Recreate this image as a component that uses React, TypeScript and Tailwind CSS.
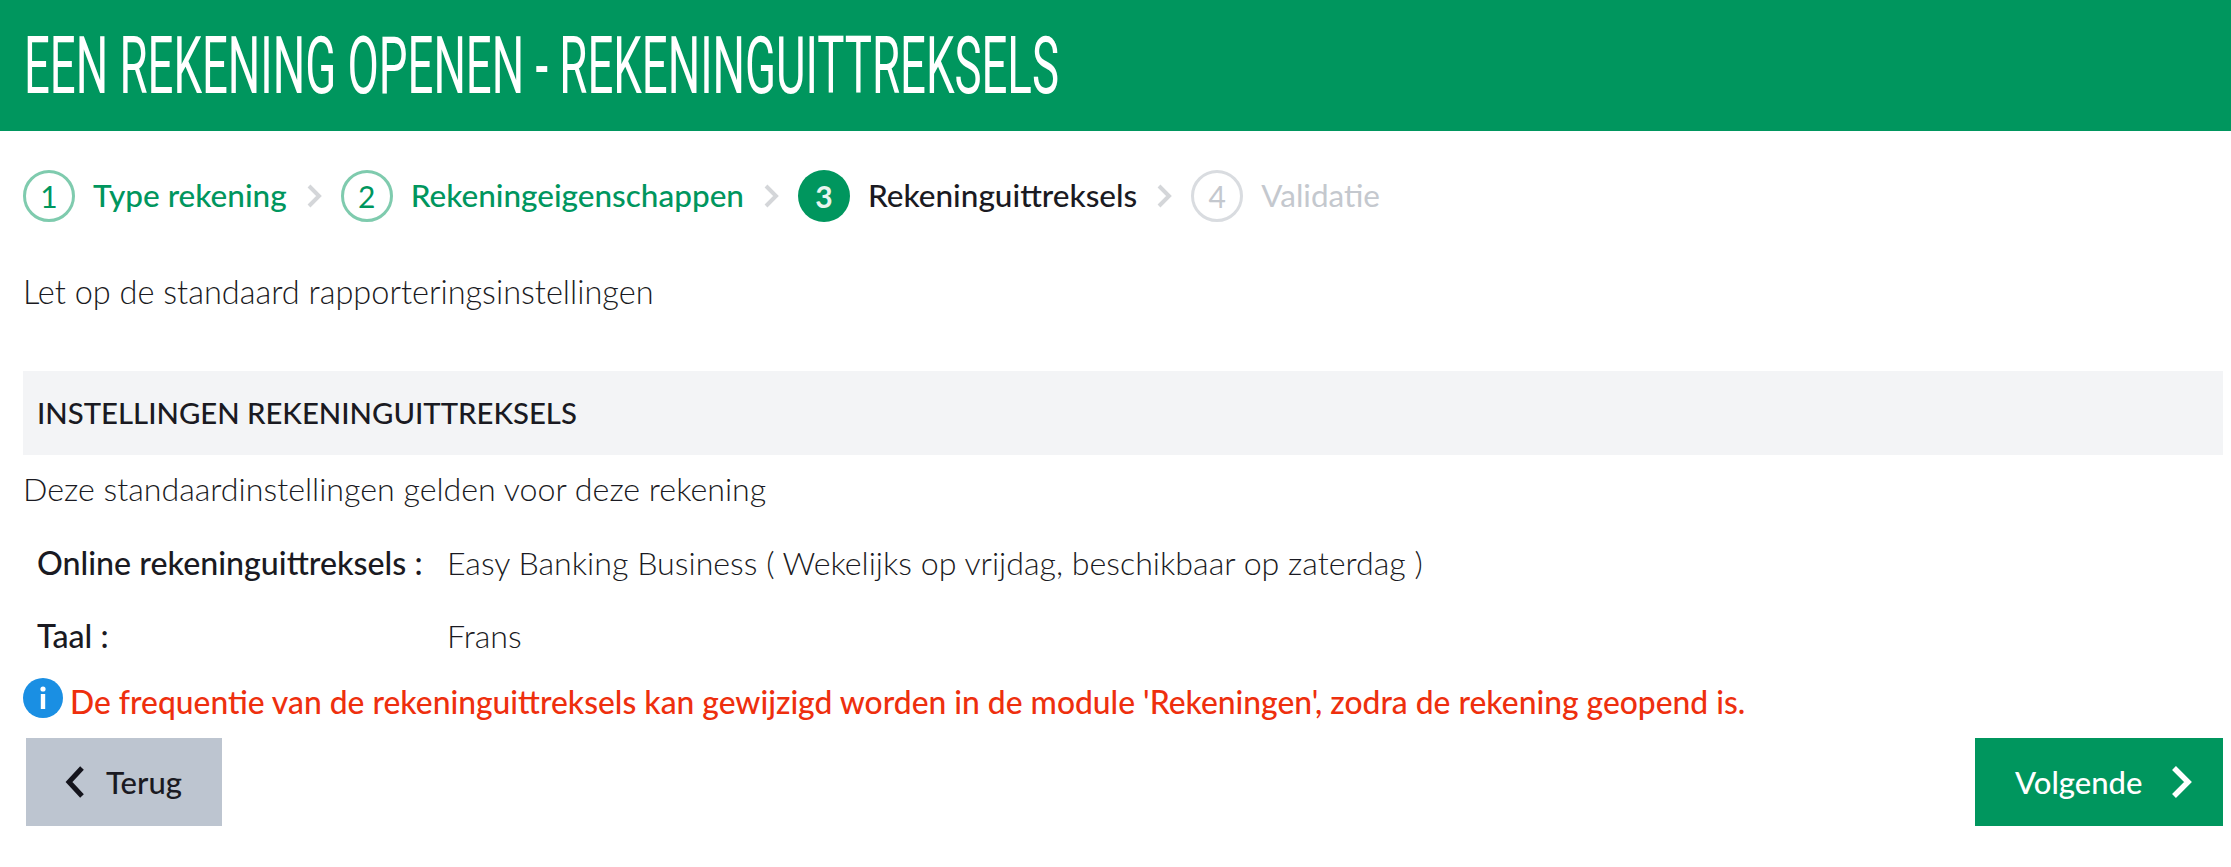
const Step = ({ n, label, state }: { n: number; label: string; state: "done" | "active" | "todo" }) => {
  const circle =
    state === "done"
      ? "border-[3px] border-[#7fcbae] text-[#00965e]"
      : state === "active"
        ? "bg-[#00965e] text-[#e8f5ef] font-bold"
        : "border-[3px] border-[#d9dce0] text-[#c4c8ce]";
  const text = state === "done" ? "text-[#00965e] font-medium" : state === "active" ? "text-[#1a1a22] font-medium" : "text-[#c4c8ce]";
  return (
    <div className="flex items-center">
      <div className={`flex h-[52px] w-[52px] shrink-0 items-center justify-center rounded-full text-[30px] ${circle}`}>{n}</div>
      <span className={`ml-[18px] text-[31.5px] leading-none ${text}`}>{label}</span>
    </div>
  );
};

const Chevron = () => (
  <svg width="18" height="26" viewBox="0 0 18 26" fill="none" className="mx-[18px] shrink-0">
    <path d="M4 3l10 10L4 23" stroke="#d4d6d9" strokeWidth="4" />
  </svg>
);

export default function App() {
  return (
    <div className="h-[867px] bg-white font-['Lato','Liberation_Sans',sans-serif] text-[#1a1a22]">
      <header className="flex h-[131px] items-center overflow-hidden bg-[#00965e] pl-[24px]">
        <h1 className="origin-left scale-x-[0.569] whitespace-nowrap font-['Roboto',sans-serif] text-[80px] leading-none text-white">
          EEN REKENING OPENEN - REKENINGUITTREKSELS
        </h1>
      </header>

      <div className="pl-[23px] pr-[8px]">
        <nav className="mt-[39px] flex items-center">
          <Step n={1} label="Type rekening" state="done" />
          <Chevron />
          <Step n={2} label="Rekeningeigenschappen" state="done" />
          <Chevron />
          <Step n={3} label="Rekeninguittreksels" state="active" />
          <Chevron />
          <Step n={4} label="Validatie" state="todo" />
        </nav>

        <p className="mt-[52px] text-[32.5px] font-light leading-[36px]">Let op de standaard rapporteringsinstellingen</p>

        <h2 className="mt-[61px] flex h-[84px] items-center bg-[#f3f4f6] pl-[14px] text-[29.3px] font-medium">
          INSTELLINGEN REKENINGUITTREKSELS
        </h2>

        <p className="mt-[16px] text-[32.2px] font-light leading-[36px]">Deze standaardinstellingen gelden voor deze rekening</p>

        <div className="mt-[38px] grid grid-cols-[410px_1fr] gap-y-[37px] pl-[14px] text-[32.2px] leading-[36px]">
          <div className="font-medium">Online rekeninguittreksels :</div>
          <div className="font-light">Easy Banking Business ( Wekelijks op vrijdag, beschikbaar op zaterdag )</div>
          <div className="font-medium">Taal :</div>
          <div className="font-light">Frans</div>
        </div>

        <div className="mt-[22px] flex items-center">
          <svg width="40" height="40" viewBox="0 0 40 40" className="shrink-0">
            <circle cx="20" cy="20" r="20" fill="#1a8fe3" />
            <circle cx="20" cy="11" r="2.6" fill="#fff" />
            <rect x="17.8" y="16" width="4.4" height="15" fill="#fff" />
          </svg>
          <p className="ml-[7px] mt-[8px] text-[31.8px] font-medium leading-[36px] text-[#ee2f0e]">
            De frequentie van de rekeninguittreksels kan gewijzigd worden in de module 'Rekeningen', zodra de rekening geopend is.
          </p>
        </div>

        <div className="mt-[18px] flex justify-between pl-[3px]">
          <button className="flex h-[88px] w-[196px] items-center bg-[#bdc5d0] pl-[39px] text-[31px] font-medium">
            <svg width="20" height="34" viewBox="0 0 20 34" fill="none">
              <path d="M17 3L4 17l13 14" stroke="#14141c" strokeWidth="5" />
            </svg>
            <span className="ml-[21px]">Terug</span>
          </button>
          <button className="flex h-[88px] w-[248px] items-center bg-[#00965e] pl-[40px] text-[31px] font-medium text-white">
            <span>Volgende</span>
            <svg width="22" height="34" viewBox="0 0 22 34" fill="none" className="ml-[28px]">
              <path d="M4 3l14 14L4 31" stroke="#fff" strokeWidth="5.5" />
            </svg>
          </button>
        </div>
      </div>
    </div>
  );
}
